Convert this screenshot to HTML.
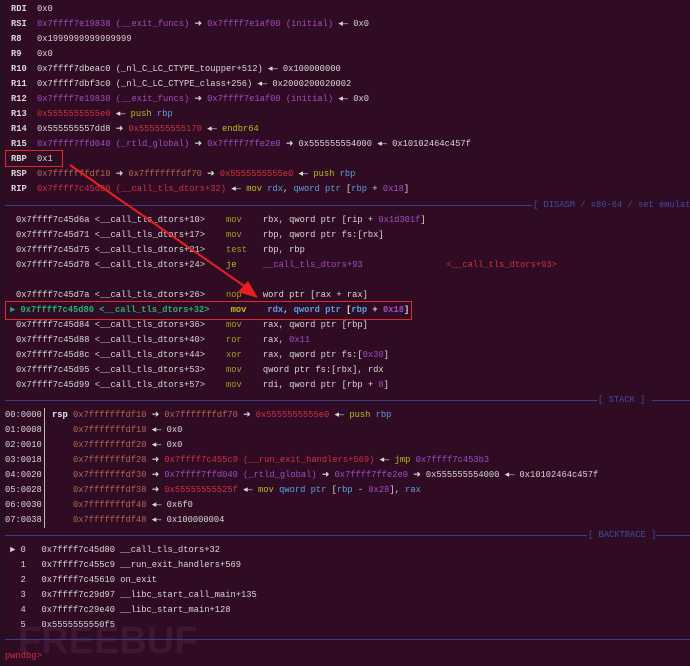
<!DOCTYPE html>
<html><head><meta charset="utf-8"><style>
html,body{margin:0;padding:0}
body{width:690px;height:666px;background:#2f0b24;position:relative;overflow:hidden;font-family:"Liberation Mono",monospace;font-size:8.75px;color:#d8d8d8}
.l{position:absolute;white-space:pre;line-height:12px;height:12px}
.b{font-weight:bold}
.p{color:#a04ec0}.r{color:#d0323f}.y{color:#b4c01e}.bl{color:#5aa0e0}.o{color:#b06a50}.g{color:#23b07a}.gm{color:#a0a020}.w{color:#e6e6e6}.hd{color:#3f4fa0}
.hr{position:absolute;height:1px;background:#3a3f8a}
.box{position:absolute;border:1.5px solid #e02a2a}
</style></head><body>
<div style="position:absolute;left:0;top:0;width:3px;height:666px;background:#241020"></div>
<div style="position:absolute;left:18px;top:620px;font-family:'Liberation Sans',sans-serif;font-weight:bold;font-size:38px;line-height:42px;color:#3d1734;letter-spacing:0px">FREEBUF</div>
<!-- registers -->
<div class="l b" style="left:11px;top:3px">RDI</div><div class="l" style="left:37px;top:3px">0x0</div>
<div class="l b" style="left:11px;top:18px">RSI</div><div class="l" style="left:37px;top:18px"><span class="p">0x7ffff7e19838 (__exit_funcs)</span> ➜ <span class="p">0x7ffff7e1af00 (initial)</span> ◂— 0x0</div>
<div class="l b" style="left:11px;top:33px">R8</div><div class="l" style="left:37px;top:33px">0x1999999999999999</div>
<div class="l b" style="left:11px;top:48px">R9</div><div class="l" style="left:37px;top:48px">0x0</div>
<div class="l b" style="left:11px;top:63px">R10</div><div class="l" style="left:37px;top:63px">0x7ffff7dbeac0 (_nl_C_LC_CTYPE_toupper+512) ◂— 0x100000000</div>
<div class="l b" style="left:11px;top:78px">R11</div><div class="l" style="left:37px;top:78px">0x7ffff7dbf3c0 (_nl_C_LC_CTYPE_class+256) ◂— 0x2000200020002</div>
<div class="l b" style="left:11px;top:93px">R12</div><div class="l" style="left:37px;top:93px"><span class="p">0x7ffff7e19838 (__exit_funcs)</span> ➜ <span class="p">0x7ffff7e1af00 (initial)</span> ◂— 0x0</div>
<div class="l b" style="left:11px;top:108px">R13</div><div class="l" style="left:37px;top:108px"><span class="r">0x5555555555e0</span> ◂— <span class="y">push</span> <span class="bl">rbp</span></div>
<div class="l b" style="left:11px;top:123px">R14</div><div class="l" style="left:37px;top:123px">0x555555557dd8 ➜ <span class="r">0x555555555170</span> ◂— <span class="y">endbr64</span></div>
<div class="l b" style="left:11px;top:138px">R15</div><div class="l" style="left:37px;top:138px"><span class="p">0x7ffff7ffd040 (_rtld_global)</span> ➜ <span class="p">0x7ffff7ffe2e0</span> ➜ 0x555555554000 ◂— 0x10102464c457f</div>
<div class="l b" style="left:11px;top:153px">RBP</div><div class="l" style="left:37px;top:153px">0x1</div>
<div class="l b" style="left:11px;top:168px">RSP</div><div class="l" style="left:37px;top:168px"><span class="o">0x7fffffffdf10</span> ➜ <span class="o">0x7fffffffdf70</span> ➜ <span class="r">0x5555555555e0</span> ◂— <span class="y">push</span> <span class="bl">rbp</span></div>
<div class="l b" style="left:11px;top:183px">RIP</div><div class="l" style="left:37px;top:183px"><span class="r">0x7ffff7c45d80 (__call_tls_dtors+32)</span> ◂— <span class="y">mov</span> <span class="bl">rdx</span>, <span class="bl">qword ptr</span> [<span class="bl">rbp</span> + <span class="p">0x18</span>]</div>
<div class="box" style="left:5px;top:150px;width:56px;height:15px"></div>
<!-- disasm -->
<div class="hr" style="left:5px;top:205px;width:527px"></div>
<div class="l hd" style="left:533px;top:199px">[ DISASM / x86-64 / set emulate</div>
<div class="l" style="left:16px;top:214px">0x7ffff7c45d6a &lt;__call_tls_dtors+10&gt;    <span class="gm">mov</span>    rbx, qword ptr [rip + <span class="p">0x1d301f</span>]</div>
<div class="l" style="left:16px;top:229px">0x7ffff7c45d71 &lt;__call_tls_dtors+17&gt;    <span class="gm">mov</span>    rbp, qword ptr fs:[rbx]</div>
<div class="l" style="left:16px;top:244px">0x7ffff7c45d75 &lt;__call_tls_dtors+21&gt;    <span class="gm">test</span>   rbp, rbp</div>
<div class="l" style="left:16px;top:259px">0x7ffff7c45d78 &lt;__call_tls_dtors+24&gt;    <span class="y">je</span>     <span class="p">__call_tls_dtors+93</span>                <span class="r">&lt;__call_tls_dtors+93&gt;</span></div>
<div class="l" style="left:16px;top:289px">0x7ffff7c45d7a &lt;__call_tls_dtors+26&gt;    <span class="gm">nop</span>    word ptr [rax + rax]</div>
<div class="l b" style="left:10px;top:304px"><span class="g">► 0x7ffff7c45d80 &lt;__call_tls_dtors+32&gt;</span>    <span class="y">mov</span>    <span class="bl">rdx</span>, <span class="bl">qword ptr</span> [<span class="bl">rbp</span> + <span class="p">0x18</span>]</div>
<div class="l" style="left:16px;top:319px">0x7ffff7c45d84 &lt;__call_tls_dtors+36&gt;    <span class="gm">mov</span>    rax, qword ptr [rbp]</div>
<div class="l" style="left:16px;top:334px">0x7ffff7c45d88 &lt;__call_tls_dtors+40&gt;    <span class="gm">ror</span>    rax, <span class="p">0x11</span></div>
<div class="l" style="left:16px;top:349px">0x7ffff7c45d8c &lt;__call_tls_dtors+44&gt;    <span class="gm">xor</span>    rax, qword ptr fs:[<span class="p">0x30</span>]</div>
<div class="l" style="left:16px;top:364px">0x7ffff7c45d95 &lt;__call_tls_dtors+53&gt;    <span class="gm">mov</span>    qword ptr fs:[rbx], rdx</div>
<div class="l" style="left:16px;top:379px">0x7ffff7c45d99 &lt;__call_tls_dtors+57&gt;    <span class="gm">mov</span>    rdi, qword ptr [rbp + <span class="p">8</span>]</div>
<div class="box" style="left:5px;top:301px;width:405px;height:17px"></div>
<!-- stack -->
<div class="hr" style="left:5px;top:400px;width:592px"></div>
<div class="l hd" style="left:598px;top:394px">[ STACK ]</div>
<div class="hr" style="left:652px;top:400px;width:38px"></div>
<div style="position:absolute;left:44px;top:408px;width:1px;height:120px;background:#bbb"></div>
<div class="l" style="left:5px;top:409px">00:0000</div><div class="l b w" style="left:52px;top:409px">rsp</div><div class="l" style="left:73px;top:409px"><span class="o">0x7fffffffdf10</span> ➜ <span class="o">0x7fffffffdf70</span> ➜ <span class="r">0x5555555555e0</span> ◂— <span class="y">push</span> <span class="bl">rbp</span></div>
<div class="l" style="left:5px;top:424px">01:0008</div><div class="l" style="left:73px;top:424px"><span class="o">0x7fffffffdf18</span> ◂— 0x0</div>
<div class="l" style="left:5px;top:439px">02:0010</div><div class="l" style="left:73px;top:439px"><span class="o">0x7fffffffdf20</span> ◂— 0x0</div>
<div class="l" style="left:5px;top:454px">03:0018</div><div class="l" style="left:73px;top:454px"><span class="o">0x7fffffffdf28</span> ➜ <span class="r">0x7ffff7c455c9 (__run_exit_handlers+569)</span> ◂— <span class="y">jmp</span> <span class="p">0x7ffff7c453b3</span></div>
<div class="l" style="left:5px;top:469px">04:0020</div><div class="l" style="left:73px;top:469px"><span class="o">0x7fffffffdf30</span> ➜ <span class="p">0x7ffff7ffd040 (_rtld_global)</span> ➜ <span class="p">0x7ffff7ffe2e0</span> ➜ 0x555555554000 ◂— 0x10102464c457f</div>
<div class="l" style="left:5px;top:484px">05:0028</div><div class="l" style="left:73px;top:484px"><span class="o">0x7fffffffdf38</span> ➜ <span class="r">0x55555555525f</span> ◂— <span class="y">mov</span> <span class="bl">qword ptr</span> [<span class="bl">rbp</span> - <span class="p">0x28</span>], <span class="bl">rax</span></div>
<div class="l" style="left:5px;top:499px">06:0030</div><div class="l" style="left:73px;top:499px"><span class="o">0x7fffffffdf40</span> ◂— 0x6f0</div>
<div class="l" style="left:5px;top:514px">07:0038</div><div class="l" style="left:73px;top:514px"><span class="o">0x7fffffffdf48</span> ◂— 0x100000004</div>
<!-- backtrace -->
<div class="hr" style="left:5px;top:535px;width:582px"></div>
<div class="l hd" style="left:588px;top:529px">[ BACKTRACE ]</div>
<div class="hr" style="left:656px;top:535px;width:34px"></div>
<div class="l" style="left:10px;top:544px">► 0   0x7ffff7c45d80 __call_tls_dtors+32</div>
<div class="l" style="left:10px;top:559px">  1   0x7ffff7c455c9 __run_exit_handlers+569</div>
<div class="l" style="left:10px;top:574px">  2   0x7ffff7c45610 on_exit</div>
<div class="l" style="left:10px;top:589px">  3   0x7ffff7c29d97 __libc_start_call_main+135</div>
<div class="l" style="left:10px;top:604px">  4   0x7ffff7c29e40 __libc_start_main+128</div>
<div class="l" style="left:10px;top:619px">  5   0x5555555550f5</div>
<div class="hr" style="left:5px;top:639px;width:685px"></div>
<div class="l r" style="left:5px;top:650px">pwndbg&gt;</div>
<!-- arrow -->
<svg style="position:absolute;left:0;top:0" width="690" height="666"><line x1="70" y1="165" x2="250" y2="290" stroke="#e82020" stroke-width="2"/><polygon points="258,298 238,292 248,281" fill="#e82020"/></svg>
</body></html>
